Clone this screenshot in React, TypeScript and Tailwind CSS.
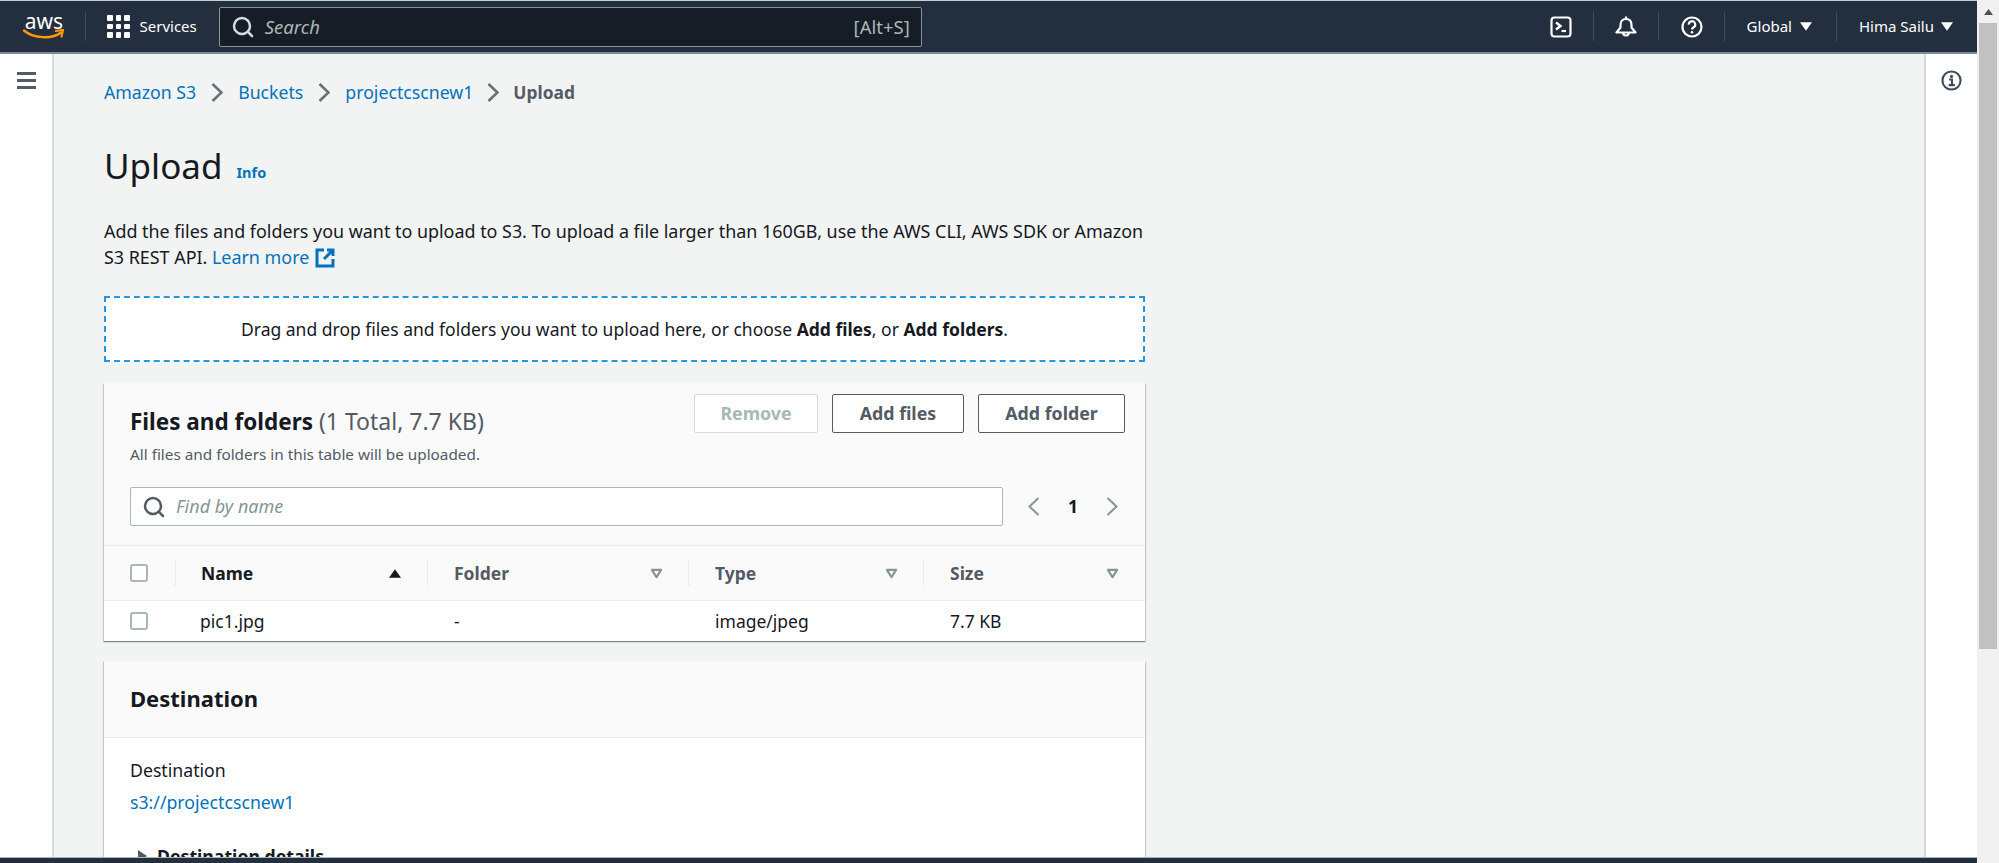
import { Search } from 'lucide-react'

const font = "font-['Noto_Sans',sans-serif]"

function AwsLogo() {
  return (
    <div className="flex h-[27px] w-[42px] flex-col items-center">
      <span className="text-[21px] leading-[16px] text-white">aws</span>
      <svg viewBox="0 0 42 11" className="h-[11px] w-[42px]">
        <path d="M1 1.5 C10 9.5 29 10.5 38 3.5" fill="none" stroke="#ff9900" strokeWidth="2.4" strokeLinecap="round" />
        <path d="M33 2 L40 0.8 L38.5 7.5" fill="none" stroke="#ff9900" strokeWidth="2.2" strokeLinecap="round" />
      </svg>
    </div>
  )
}

function GridIcon() {
  return (
    <div className="grid grid-cols-3 gap-[3px]">
      {Array.from({ length: 9 }).map((_, i) => (
        <span key={i} className="h-[5.5px] w-[5.5px] rounded-[1px] bg-white" />
      ))}
    </div>
  )
}

function Divider() {
  return <span className="block h-[29px] w-px bg-[#414d5c]" />
}

function TerminalIcon() {
  return (
    <svg viewBox="0 0 22 22" className="h-[22px] w-[22px]" fill="none" stroke="#fff" strokeWidth="2.2">
      <rect x="1.5" y="1.5" width="19" height="19" rx="3" />
      <path d="M6 6.5 L10.5 10 L6 13.5" strokeWidth="2.4" />
      <path d="M11.5 15 H16" />
    </svg>
  )
}

function BellIcon() {
  return (
    <svg viewBox="0 0 22 22" className="h-[22px] w-[22px]" fill="none" stroke="#fff" strokeWidth="2.2" strokeLinejoin="round">
      <path d="M11 3 C7 3 5.5 6 5.5 9 V11.5 L1.5 16.5 H20.5 L16.5 11.5 V9 C16.5 6 15 3 11 3 Z" />
      <path d="M11 0.5 V3" />
      <path d="M8 16.5 A3 3 0 0 0 14 16.5" />
    </svg>
  )
}

function HelpIcon() {
  return (
    <svg viewBox="0 0 22 22" className="h-[22px] w-[22px]" fill="none" stroke="#fff" strokeWidth="2.2">
      <circle cx="11" cy="11" r="9.5" />
      <path d="M7.8 8.6 A3.2 3.2 0 1 1 12.6 11.2 C11.5 11.9 11 12.3 11 13.6" />
      <circle cx="11" cy="16.2" r="1.3" fill="#fff" stroke="none" />
    </svg>
  )
}

function InfoCircle() {
  return (
    <svg viewBox="0 0 22 22" className="h-[21px] w-[21px]" fill="none" stroke="#414d5c" strokeWidth="2.2">
      <circle cx="11" cy="11" r="9.5" />
      <circle cx="11" cy="6.8" r="1.7" fill="#414d5c" stroke="none" />
      <path d="M8.5 10 H11.5 V15.5 M8 15.8 H14.5" />
    </svg>
  )
}

function ExternalIcon() {
  return (
    <svg viewBox="0 0 20 20" className="ml-[6px] inline h-[20px] w-[20px] align-[-4px]" fill="none" stroke="#0073bb" strokeWidth="3">
      <path d="M9 2 H2 V18 H18 V11" />
      <path d="M12 2 H18 V8 M18 2 L9 11" />
    </svg>
  )
}

function Chevron({ left, color = '#687078', weight = 2.6 }: { left?: boolean; color?: string; weight?: number }) {
  return (
    <svg viewBox="0 0 12 19" className="h-[19px] w-[12px]" fill="none" stroke={color} strokeWidth={weight}>
      <path d={left ? 'M10.5 1 L1.5 9.5 L10.5 18' : 'M1.5 1 L10.5 9.5 L1.5 18'} />
    </svg>
  )
}

function FilterArrow() {
  return (
    <svg viewBox="0 0 14 12" className="h-[11px] w-[13px]" fill="none" stroke="#879596" strokeWidth="2.4">
      <path d="M2 2 H12 L7 10 Z" strokeLinejoin="round" />
    </svg>
  )
}

function SolidArrow({ up, color = '#fff' }: { up?: boolean; color?: string }) {
  return (
    <svg viewBox="0 0 14 10" className="h-[9px] w-[12px]">
      <path d={up ? 'M7 0 L14 10 H0 Z' : 'M0 0 H14 L7 10 Z'} fill={color} />
    </svg>
  )
}

function Checkbox() {
  return <span className="block h-[18px] w-[18px] rounded-[3px] border-2 border-[#aab7b8] bg-white" />
}

function ColSep() {
  return <span className="h-[26px] w-px bg-[#eaeded]" />
}

function Card({ children, className = '' }: { children: React.ReactNode; className?: string }) {
  return (
    <section className={`bg-white shadow-[0_1px_1px_0_rgba(0,28,36,0.3),1px_1px_1px_0_rgba(0,28,36,0.15),-1px_1px_1px_0_rgba(0,28,36,0.15)] ${className}`}>
      {children}
    </section>
  )
}

function TopBar() {
  return (
    <header className="flex h-[54px] shrink-0 items-center border-t border-[#c5d0d0] border-b-2 border-b-[#7d8a96] bg-[#232f3e] text-white">
      <div className="ml-[23px] mr-[20px]">
        <AwsLogo />
      </div>
      <Divider />
      <div className="ml-[21px] flex items-center gap-[10px]">
        <GridIcon />
        <span className="text-[15px]">Services</span>
      </div>
      <div className="ml-[22px] flex h-[40px] w-[703px] items-center rounded-[2px] border border-[#879596] bg-[#161d26] pl-[11px] pr-[11px]">
        <Search className="h-[24px] w-[24px] text-[#d5dbdb]" strokeWidth={2.5} />
        <span className="ml-[10px] flex-1 text-[18.5px] text-[#aab7b8] italic">Search</span>
        <span className="text-[18.5px] text-[#aab7b8]">[Alt+S]</span>
      </div>
      <div className="ml-auto flex items-center">
        <TerminalIcon />
        <span className="mx-[21px]"><Divider /></span>
        <BellIcon />
        <span className="ml-[21px] mr-[22px]"><Divider /></span>
        <HelpIcon />
        <span className="ml-[21px] mr-[22px]"><Divider /></span>
        <span className="text-[15px]">Global</span>
        <span className="ml-[8px] mr-[24px]"><SolidArrow /></span>
        <Divider />
        <span className="ml-[22px] text-[15px]">Hima Sailu</span>
        <span className="ml-[7px] mr-[24px]"><SolidArrow /></span>
      </div>
    </header>
  )
}

function MainContent() {
  return (
    <main className="flex-1 overflow-hidden bg-[#f2f3f3] px-[50px]">
      <div className="w-[1041px] text-[#16191f]">
        <nav className="mt-[23px] flex h-[30px] items-center text-[17.7px]">
          <span className="text-[#0073bb]">Amazon S3</span>
          <span className="mx-[15px]"><Chevron /></span>
          <span className="text-[#0073bb]">Buckets</span>
          <span className="mx-[15px]"><Chevron /></span>
          <span className="text-[#0073bb]">projectcscnew1</span>
          <span className="mx-[14px]"><Chevron /></span>
          <span className="text-[17.4px] font-bold text-[#545b64]">Upload</span>
        </nav>

        <div className="mt-[34px] flex h-[50px] items-center gap-[14px]">
          <h1 className="text-[35px] leading-[50px] text-[#16191f]">Upload</h1>
          <span className="mt-[13px] text-[14.5px] font-bold text-[#0073bb]">Info</span>
        </div>

        <p className="mt-[27px] text-[17.9px] leading-[26px]">
          Add the files and folders you want to upload to S3. To upload a file larger than 160GB, use the AWS CLI, AWS SDK or Amazon S3 REST API.{' '}
          <span className="text-[#0073bb]">
            Learn more
            <ExternalIcon />
          </span>
        </p>

        <div className="mt-[26px] flex h-[66px] items-center justify-center border-2 border-dashed border-[#2a96d8] bg-white text-[17.5px]">
          <span>
            Drag and drop files and folders you want to upload here, or choose <b>Add files</b>, or <b>Add folders</b>.
          </span>
        </div>

        <Card className="mt-[21px]">
          <div className="bg-[#fafafa]">
            <div className="flex items-start justify-between pl-[26px] pr-[20px] pt-[11px]">
              <div>
                <h2 className="mt-[11px] text-[22.5px] leading-[32px] font-bold">
                  Files and folders <span className="text-[23px] font-normal text-[#545b64]">(1 Total, 7.7 KB)</span>
                </h2>
                <p className="mt-[5px] text-[15.3px] leading-[22px] text-[#545b64]">All files and folders in this table will be uploaded.</p>
              </div>
              <div className="flex gap-[14px] text-[17.8px] font-bold">
                <button className="h-[39px] w-[124px] rounded-[2px] border border-[#d5dbdb] bg-white text-[#aab7b8]">Remove</button>
                <button className="h-[39px] w-[132px] rounded-[2px] border border-[#545b64] bg-white text-[#545b64]">Add files</button>
                <button className="h-[39px] w-[147px] rounded-[2px] border border-[#545b64] bg-white text-[#545b64]">Add folder</button>
              </div>
            </div>

            <div className="mt-[22px] flex items-center pl-[26px] pr-[27px]">
              <div className="flex h-[39px] w-[873px] items-center rounded-[2px] border border-[#aab7b8] bg-white pl-[11px]">
                <Search className="h-[24px] w-[24px] text-[#545b64]" strokeWidth={2.5} />
                <span className="ml-[10px] text-[18px] text-[#879596] italic">Find by name</span>
              </div>
              <div className="ml-auto flex items-center gap-[28px] text-[17.5px] font-bold">
                <Chevron left color="#879596" weight={2} />
                <span>1</span>
                <Chevron color="#879596" weight={2} />
              </div>
            </div>

            <div className="mt-[19px] flex h-[55px] items-center border-t border-[#eaeded] text-[17.5px] font-bold">
              <div className="flex w-[72px] items-center justify-between pl-[26px]">
                <Checkbox />
                <ColSep />
              </div>
              <div className="flex w-[252px] items-center pl-[25px]">
                <span className="flex-1">Name</span>
                <span className="mr-[26px]"><SolidArrow up color="#16191f" /></span>
                <ColSep />
              </div>
              <div className="flex w-[261px] items-center pl-[26px] text-[#545b64]">
                <span className="flex-1">Folder</span>
                <span className="mr-[25px]"><FilterArrow /></span>
                <ColSep />
              </div>
              <div className="flex w-[235px] items-center pl-[26px] text-[#545b64]">
                <span className="flex-1">Type</span>
                <span className="mr-[25px]"><FilterArrow /></span>
                <ColSep />
              </div>
              <div className="flex flex-1 items-center pl-[26px] pr-[26px] text-[#545b64]">
                <span className="flex-1">Size</span>
                <FilterArrow />
              </div>
            </div>
          </div>
          <div className="flex h-[41px] items-center border-t border-[#eaeded] bg-white text-[17.5px]">
            <div className="w-[72px] pl-[26px]"><Checkbox /></div>
            <div className="w-[252px] pl-[24px]">pic1.jpg</div>
            <div className="w-[261px] pl-[26px]">-</div>
            <div className="w-[235px] pl-[26px]">image/jpeg</div>
            <div className="flex-1 pl-[26px]">7.7 KB</div>
          </div>
        </Card>

        <Card className="mt-[20px] h-[300px]">
          <div className="flex h-[77px] items-center border-b border-[#eaeded] bg-[#fafafa] pb-[2px] pl-[26px] text-[22px] font-bold">
            Destination
          </div>
          <div className="pl-[26px] pt-[19px] text-[17.7px]">
            <div className="leading-[26px]">Destination</div>
            <div className="mt-[6px] leading-[26px] text-[#0073bb]">s3://projectcscnew1</div>
            <div className="mt-[28px] flex items-center gap-[10px] font-bold">
              <span className="ml-[8px] h-0 w-0 border-y-[6px] border-l-[9px] border-y-transparent border-l-[#545b64]" />
              Destination details
            </div>
          </div>
        </Card>
      </div>
    </main>
  )
}

function Scrollbar() {
  return (
    <aside className="flex w-[22px] shrink-0 flex-col bg-[#f0f0f0] pl-[2px]">
      <div className="flex h-[23px] w-[18px] items-center justify-center">
        <svg viewBox="0 0 9 6" className="h-[6px] w-[9px]">
          <path d="M4.5 0 L9 6 H0 Z" fill="#505050" />
        </svg>
      </div>
      <div className="h-[626px] w-[18px] bg-[#c1c1c1]" />
    </aside>
  )
}

export default function App() {
  return (
    <div className={`flex h-[863px] w-full overflow-hidden bg-white ${font}`}>
      <div className="flex min-w-0 flex-1 flex-col">
        <TopBar />
        <div className="flex min-h-0 flex-1">
          <div className="flex w-[54px] shrink-0 justify-center border-r-2 border-[#d5dbdb] bg-white pt-[18px]">
            <div className="flex h-[17px] w-[19px] flex-col justify-between">
              <span className="h-[3px] bg-[#545b64]" />
              <span className="h-[3px] bg-[#545b64]" />
              <span className="h-[3px] bg-[#545b64]" />
            </div>
          </div>
          <MainContent />
          <div className="flex w-[53px] shrink-0 justify-center border-l-2 border-[#d5dbdb] bg-white pt-[16px]">
            <InfoCircle />
          </div>
        </div>
        <footer className="h-[6px] shrink-0 border-t border-[#aab7b8] bg-[#232f3e]" />
      </div>
      <Scrollbar />
    </div>
  )
}
